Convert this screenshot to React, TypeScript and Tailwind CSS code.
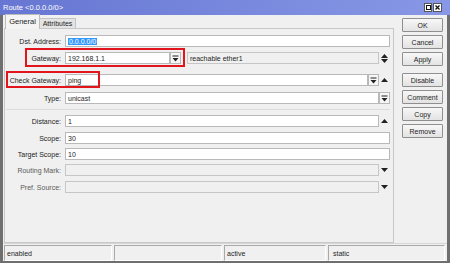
import React from 'react';

const DropIcon = () => (
  <svg width="7" height="7" viewBox="0 0 7 7">
    <rect x="0.5" y="0.5" width="6" height="1" fill="#222" />
    <path d="M0.5 3 L6.5 3 L3.5 6.5 Z" fill="#222" />
  </svg>
);

const Up = () => (
  <svg width="7" height="4" viewBox="0 0 7 4">
    <path d="M0 4 L7 4 L3.5 0 Z" fill="#222" />
  </svg>
);

const Down = () => (
  <svg width="7" height="4" viewBox="0 0 7 4">
    <path d="M0 0 L7 0 L3.5 4 Z" fill="#222" />
  </svg>
);

function DropBtn() {
  return (
    <div className="w-[11px] h-[12px] border border-[#b8b8b8] bg-[#f6f6f6] flex items-center justify-center shrink-0">
      <DropIcon />
    </div>
  );
}

function Input({ value, disabled, className = '' }: { value?: React.ReactNode; disabled?: boolean; className?: string }) {
  return (
    <div
      className={`h-[12px] border flex items-center pl-[2px] ${
        disabled ? 'bg-[#f0f0f0] border-[#c6c6c6]' : 'bg-white border-[#b9b9b9]'
      } ${className}`}
    >
      {value}
    </div>
  );
}

function Row({
  label,
  children,
  className = '',
  dim = false,
}: {
  label: string;
  children: React.ReactNode;
  className?: string;
  dim?: boolean;
}) {
  return (
    <div className={`flex items-center h-[12px] ${className}`}>
      <div className={`w-[57px] text-right pr-[1px] whitespace-nowrap ${dim ? 'text-[#5a5a5a]' : ''}`}>{label}</div>
      <div className="ml-[3px] flex-1 flex items-center">{children}</div>
    </div>
  );
}

function Btn({ label, className = '' }: { label: string; className?: string }) {
  return (
    <div
      className={`h-[14px] w-[41px] border border-[#8f8f8f] rounded-[1px] bg-linear-to-b from-[#f7f7f7] to-[#e3e3e3] flex items-center justify-center ${className}`}
    >
      {label}
    </div>
  );
}

const Arrow = ({ children }: { children?: React.ReactNode }) => (
  <div className="w-[11px] flex flex-col items-center justify-center gap-[1px] shrink-0">{children}</div>
);

export default function App() {
  return (
    <div className="relative w-[450px] h-[263px] bg-[#6f6f6f] flex flex-col overflow-hidden font-['Liberation_Sans',Arial,sans-serif] text-[7px] text-[#1e1e1e] leading-none">
      {/* title bar */}
      <div className="h-[15px] flex items-center bg-linear-to-r from-[#6676d2] to-[#8898e6] pl-[3px] text-white text-[7.5px]">
        <span>Route &lt;0.0.0.0/0&gt;</span>
        <div className="ml-auto mr-[8px] flex gap-[1px]">
          <div className="w-[8px] h-[9px] bg-white border border-[#555] flex items-center justify-center">
            <div className="w-[5px] h-[5px] border border-[#111]" />
          </div>
          <div className="w-[9px] h-[9px] bg-white border border-[#555] flex items-center justify-center">
            <svg width="5" height="5" viewBox="0 0 5 5">
              <path d="M0.5 0.5 L4.5 4.5 M4.5 0.5 L0.5 4.5" stroke="#111" strokeWidth="1.3" />
            </svg>
          </div>
        </div>
      </div>

      {/* body */}
      <div className="flex-1 mx-[3px] mb-[2px] bg-[#f0f0f0] flex flex-col">
        <div className="h-[228px] flex">
          <div className="ml-[1px] w-[390px] flex flex-col">
            {/* tabs */}
            <div className="h-[13px] flex items-end pl-[1px]">
              <div className="relative z-10 -mb-[1px] h-[15px] w-[35px] border border-b-0 border-[#bcbcbc] bg-[#f4f4f4] flex items-center justify-center text-[7.5px]">
                General
              </div>
              <div className="h-[10px] w-[36px] border border-l-0 border-b-0 border-[#c4c4c4] bg-[#e4e4e4] flex items-center justify-center">
                Attributes
              </div>
            </div>
            {/* panel */}
            <div className="flex-1 border border-[#c8c8c8] pt-[6px] pr-[3px] flex flex-col">
              <Row label="Dst. Address:">
                <Input
                  className="flex-1"
                  value={<span className="bg-[#3399ff] text-white px-[1px]">0.0.0.0/0</span>}
                />
              </Row>
              <Row label="Gateway:" className="mt-[5px]">
                <Input className="w-[105px]" value="192.168.1.1" />
                <DropBtn />
                <Input disabled className="ml-[6px] flex-1" value="reachable ether1" />
                <Arrow>
                  <Up />
                  <Down />
                </Arrow>
              </Row>
              <Row label="Check Gateway:" className="mt-[10px]">
                <Input className="flex-1" value="ping" />
                <DropBtn />
                <Arrow>
                  <Up />
                </Arrow>
              </Row>
              <Row label="Type:" className="mt-[6px]">
                <Input className="flex-1" value="unicast" />
                <DropBtn />
              </Row>
              <div className="mt-[5px] ml-[1px] h-[1px] bg-[#dcdcdc]" />
              <Row label="Distance:" className="mt-[5px]">
                <Input className="flex-1" value="1" />
                <Arrow>
                  <Up />
                </Arrow>
              </Row>
              <Row label="Scope:" className="mt-[5px]">
                <Input className="flex-1" value="30" />
              </Row>
              <Row label="Target Scope:" className="mt-[4px]">
                <Input className="flex-1" value="10" />
              </Row>
              <Row label="Routing Mark:" className="mt-[4px]" dim>
                <Input disabled className="flex-1" />
                <Arrow>
                  <Down />
                </Arrow>
              </Row>
              <Row label="Pref. Source:" className="mt-[5px]" dim>
                <Input disabled className="flex-1" />
                <Arrow>
                  <Down />
                </Arrow>
              </Row>
            </div>
          </div>

          {/* buttons */}
          <div className="ml-[8px] pt-[3px] flex flex-col">
            <Btn label="OK" />
            <Btn label="Cancel" className="mt-[3px]" />
            <Btn label="Apply" className="mt-[3px]" />
            <Btn label="Disable" className="mt-[7px]" />
            <Btn label="Comment" className="mt-[3px]" />
            <Btn label="Copy" className="mt-[3px]" />
            <Btn label="Remove" className="mt-[3px]" />
          </div>
        </div>

        {/* status bar */}
        <div className="flex-1 flex gap-[2px] pl-[1px] pr-[2px] pt-[1px] border-t border-[#d6d6d6]">
          <div className="w-[108px] border-t border-l border-[#a9a9a9] border-r border-b border-r-white border-b-white flex items-center pl-[2px]">
            enabled
          </div>
          <div className="w-[108px] border-t border-l border-[#a9a9a9] border-r border-b border-r-white border-b-white" />
          <div className="w-[102px] border-t border-l border-[#a9a9a9] border-r border-b border-r-white border-b-white flex items-center pl-[2px]">
            active
          </div>
          <div className="flex-1 border-t border-l border-[#a9a9a9] border-r border-b border-r-white border-b-white flex items-center pl-[4px]">
            static
          </div>
        </div>
      </div>

      {/* red highlight frames */}
      <div className="absolute left-[25px] top-[48px] w-[160px] h-[19px] border-2 border-[#e2151d]" />
      <div className="absolute left-[6px] top-[71px] w-[94px] h-[17px] border-2 border-[#e2151d]" />
    </div>
  );
}
